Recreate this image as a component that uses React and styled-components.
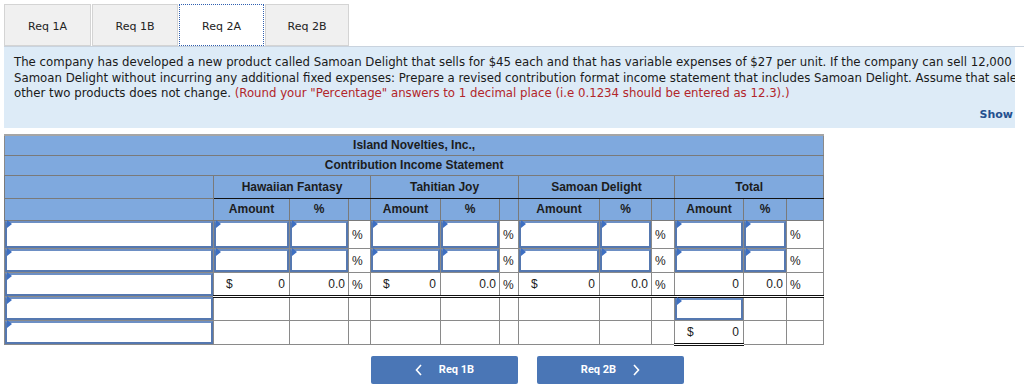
import React from "react";
import styled, { createGlobalStyle } from "styled-components";

const GlobalStyle = createGlobalStyle`
  body {
    margin: 0;
    overflow: hidden;
    background: #fff;
    font-family: "DejaVu Sans", Verdana, sans-serif;
  }
`;

const columns = [209, 76, 59, 22, 70, 59, 19, 81, 52, 23, 69, 43, 37];

const products = [
  { name: "Hawaiian Fantasy" },
  { name: "Tahitian Joy" },
  { name: "Samoan Delight" },
  { name: "Total" },
];

const App = () => {
  return (
    <Page>
      <GlobalStyle />
      <Tabs>
        <Tab w={87}>Req 1A</Tab>
        <Tab w={86}>Req 1B</Tab>
        <Tab w={85} active>
          Req 2A
        </Tab>
        <Tab w={84}>Req 2B</Tab>
      </Tabs>

      <Info>
        <Line>
          The company has developed a new product called Samoan Delight that sells for $45 each and that has
          variable expenses of $27 per unit. If the company can sell 12,000 units of
        </Line>
        <Line>
          Samoan Delight without incurring any additional fixed expenses: Prepare a revised contribution format
          income statement that includes Samoan Delight. Assume that sales of the
        </Line>
        <Line>
          other two products does not change.{" "}
          <Hint>
            (Round your "Percentage" answers to 1 decimal place (i.e 0.1234 should be entered as 12.3).)
          </Hint>
        </Line>
        <ShowLink>Show</ShowLink>
      </Info>

      <Sheet>
        <colgroup>
          {columns.map((w, i) => (
            <col key={i} style={{ width: w }} />
          ))}
        </colgroup>
        <tbody>
          <HeadRow h={20}>
            <Title colSpan={13}>Island Novelties, Inc.,</Title>
          </HeadRow>
          <HeadRow h={20}>
            <Title colSpan={13}>Contribution Income Statement</Title>
          </HeadRow>
          <HeadRow h={23}>
            <HeadCell />
            {products.map((p) => (
              <HeadCell key={p.name} colSpan={3} ruled>
                {p.name}
              </HeadCell>
            ))}
          </HeadRow>
          <HeadRow h={22}>
            <HeadCell />
            {products.map((p) => (
              <React.Fragment key={p.name}>
                <HeadCell>Amount</HeadCell>
                <HeadCell>%</HeadCell>
                <HeadCell />
              </React.Fragment>
            ))}
          </HeadRow>

          {[28, 24].map((h, r) => (
            <Row key={r} h={h}>
              <Cell>
                <Entry />
              </Cell>
              {products.map((p) => (
                <React.Fragment key={p.name}>
                  <Cell>
                    <Entry />
                  </Cell>
                  <Cell>
                    <Entry />
                  </Cell>
                  <Cell>
                    <Sign>%</Sign>
                  </Cell>
                </React.Fragment>
              ))}
            </Row>
          ))}

          <Row h={24}>
            <Cell>
              <Entry />
            </Cell>
            {products.map((p, i) => (
              <React.Fragment key={p.name}>
                <Cell double>
                  <Money>
                    <span>{i < 3 ? "$" : ""}</span>
                    <span>0</span>
                  </Money>
                </Cell>
                <Cell double>
                  <Figure>0.0</Figure>
                </Cell>
                <Cell double>
                  <Sign>%</Sign>
                </Cell>
              </React.Fragment>
            ))}
          </Row>

          <Row h={24}>
            <Cell>
              <Entry />
            </Cell>
            {columns.slice(1).map((_, i) => (
              <Cell key={i}>{i === 9 ? <Entry /> : null}</Cell>
            ))}
          </Row>

          <Row h={24}>
            <Cell>
              <Entry />
            </Cell>
            {columns.slice(1).map((_, i) => (
              <Cell key={i} double={i === 9}>
                {i === 9 ? (
                  <Money>
                    <span>$</span>
                    <span>0</span>
                  </Money>
                ) : null}
              </Cell>
            ))}
          </Row>
        </tbody>
      </Sheet>

      <Nav>
        <NavButton>
          <Chevron viewBox="0 0 8 12">
            <path d="M6 1 L1.5 6 L6 11" />
          </Chevron>
          Req 1B
        </NavButton>
        <NavButton>
          Req 2B
          <Chevron viewBox="0 0 8 12">
            <path d="M2 1 L6.5 6 L2 11" />
          </Chevron>
        </NavButton>
      </Nav>
    </Page>
  );
};

const Page = styled.div`
  padding: 4px 0 0 4px;
`;

const Tabs = styled.div`
  display: flex;
  border-bottom: 1px solid #c9d3de;
  width: 1020px;
`;

const Tab = styled.div`
  box-sizing: border-box;
  width: ${(p) => p.w}px;
  height: 42px;
  padding-top: 3px;
  display: flex;
  align-items: center;
  justify-content: center;
  font-size: 11px;
  color: #222;
  background: ${(p) => (p.active ? "#fff" : "#f0f0f0")};
  border: ${(p) => (p.active ? "1px dotted #2f5fb0" : "1px solid #d4d4d4")};
  margin-right: 1px;
`;

const Info = styled.div`
  position: relative;
  box-sizing: border-box;
  width: 1011px;
  height: 81px;
  background: #ddebf7;
  padding: 8px 0 0 10px;
  overflow: hidden;
  font-size: 11.75px;
  line-height: 15.5px;
  color: #1a1a1a;
`;

const Line = styled.div`
  white-space: nowrap;
`;

const Hint = styled.span`
  color: #b2262a;
`;

const ShowLink = styled.div`
  position: absolute;
  right: 2px;
  top: 60px;
  font-size: 11px;
  font-weight: bold;
  color: #24508f;
  white-space: nowrap;
`;

const Sheet = styled.table`
  margin-top: 6px;
  border-collapse: collapse;
  table-layout: fixed;
  width: 819px;
  font-family: "Liberation Sans", Arial, sans-serif;
  font-size: 12px;
  color: #1c1c1c;
  border: 1px solid #8a8a8a;
  border-top: 2px solid #a5a5a5;
`;

const HeadRow = styled.tr`
  height: ${(p) => p.h}px;
  background: #7fa9de;
`;

const Title = styled.td`
  text-align: center;
  font-weight: bold;
  padding: 0;
  border-bottom: 1px solid #7a7a7a;
`;

const HeadCell = styled.td`
  text-align: center;
  font-weight: bold;
  padding: 0;
  border: 1px solid #7a7a7a;
  border-bottom: 1px solid ${(p) => (p.ruled ? "#111" : "#7a7a7a")};
`;

const Row = styled.tr`
  height: ${(p) => p.h}px;
  background: #fff;
`;

const Cell = styled.td`
  position: relative;
  padding: 0;
  border: 1px solid #8a8a8a;
  border-bottom: ${(p) => (p.double ? "3px double #111" : "1px solid #8a8a8a")};
`;

const Entry = styled.div`
  position: absolute;
  inset: 0;
  border: 2px solid #5578b0;
  border-top-color: #6d8fc4;
  background: #fff;
  &::before {
    content: "";
    position: absolute;
    left: 0;
    top: 0;
    border-top: 4px solid transparent;
    border-bottom: 4px solid transparent;
    border-left: 5px solid #3d6fc2;
    transform: translateY(-3px);
  }
`;

const Sign = styled.div`
  padding-left: 3px;
  padding-top: 2px;
`;

const Money = styled.div`
  display: flex;
  justify-content: space-between;
  padding: 0 4px 0 12px;
`;

const Figure = styled.div`
  text-align: right;
  padding-right: 3px;
`;

const Nav = styled.div`
  display: flex;
  gap: 19px;
  padding: 10px 0 0 367px;
`;

const NavButton = styled.div`
  box-sizing: border-box;
  width: 147px;
  height: 28px;
  border-radius: 2px;
  background: #4a76b6;
  color: #fff;
  display: flex;
  align-items: center;
  justify-content: center;
  gap: 16px;
  font-family: Roboto, "Liberation Sans", sans-serif;
  font-weight: bold;
  font-size: 11px;
`;

const Chevron = styled.svg`
  width: 8px;
  height: 12px;
  fill: none;
  stroke: #fff;
  stroke-width: 1.6;
`;

export default App;
